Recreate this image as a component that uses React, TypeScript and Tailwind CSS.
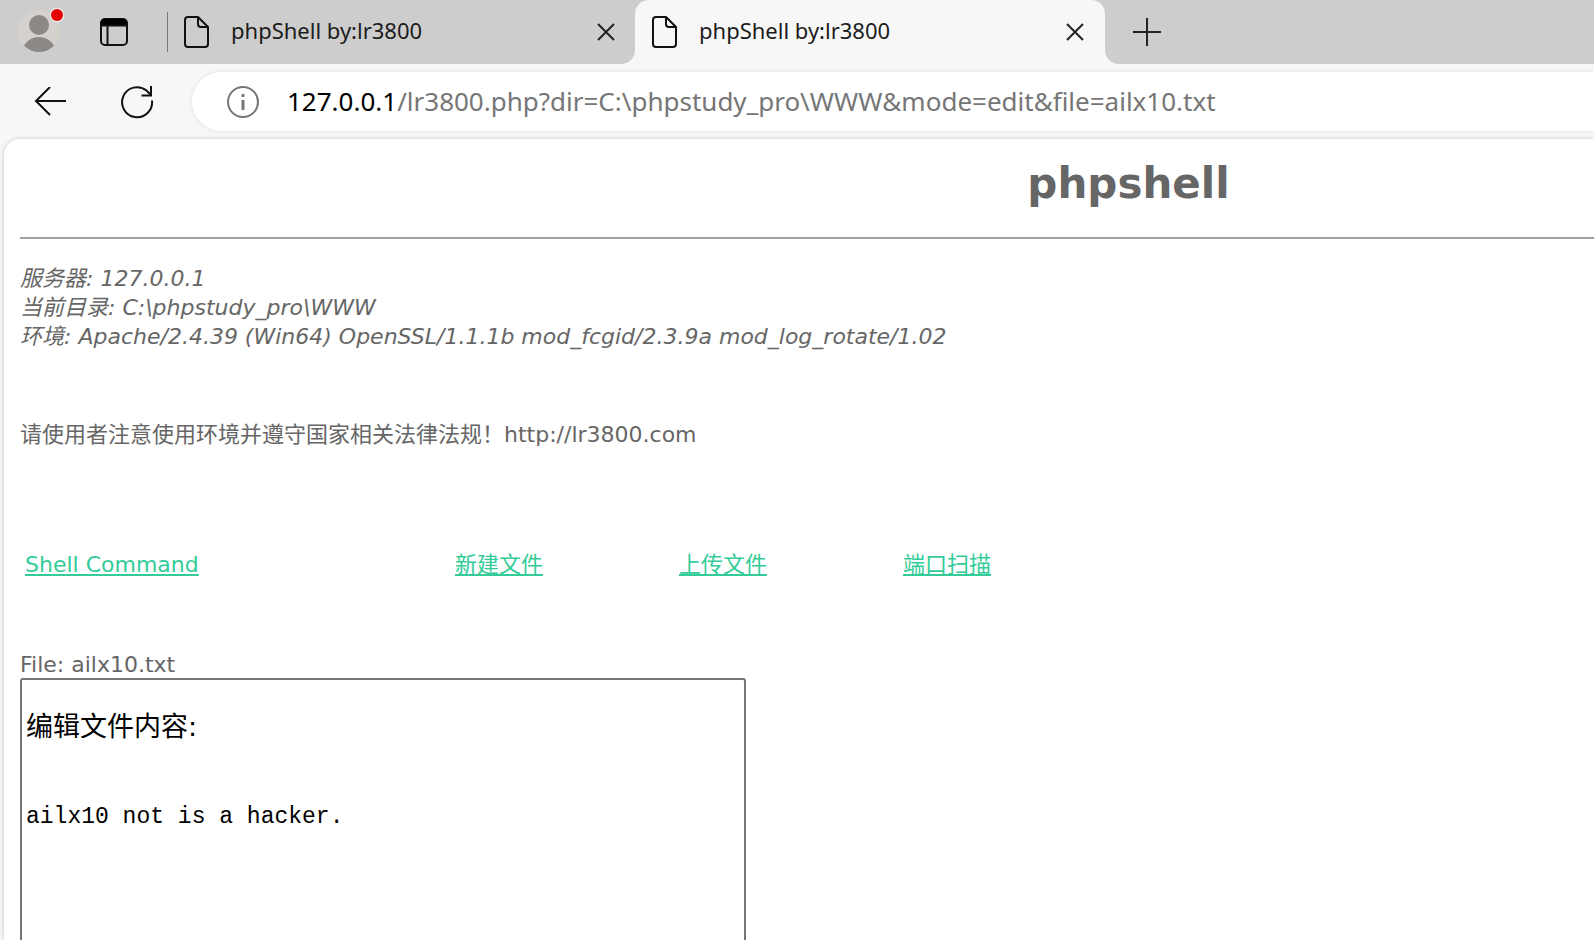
import React, { useState } from 'react';

interface BrowserTab {
  id: number;
  title: string;
}

const TABS: BrowserTab[] = [
  { id: 1, title: 'phpShell by:lr3800' },
  { id: 2, title: 'phpShell by:lr3800' },
];

const SERVER_INFO = [
  { label: '服务器', value: '127.0.0.1' },
  { label: '当前目录', value: 'C:\\phpstudy_pro\\WWW' },
  { label: '环境', value: 'Apache/2.4.39 (Win64) OpenSSL/1.1.1b mod_fcgid/2.3.9a mod_log_rotate/1.02' },
];

const MENU = ['Shell Command', '新建文件', '上传文件', '端口扫描'];

// Icons

function AvatarIcon() {
  return (
    <svg width="48" height="48" viewBox="0 0 48 48">
      <defs>
        <clipPath id="avatar-clip">
          <circle cx="21" cy="25" r="21" />
        </clipPath>
      </defs>
      <circle cx="21" cy="25" r="21" fill="#d5d2cd" />
      <g clipPath="url(#avatar-clip)" fill="#8c8886">
        <circle cx="21" cy="19" r="10" />
        <ellipse cx="21" cy="47" rx="17" ry="16" />
      </g>
      <circle cx="39" cy="9" r="7.5" fill="#e8e6e4" />
      <circle cx="39" cy="9" r="6" fill="#e60000" />
    </svg>
  );
}

function TabActionsIcon() {
  return (
    <svg width="28" height="28" viewBox="0 0 28 28" fill="none" stroke="#111" strokeWidth="2">
      <rect x="1" y="1" width="26" height="26" rx="4" />
      <path d="M1 8V5a4 4 0 0 1 4-4h18a4 4 0 0 1 4 4v3z" fill="#000" stroke="none" />
      <path d="M1 7.5h26M7.500 8v19" />
    </svg>
  );
}

function FileIcon() {
  return (
    <svg className="shrink-0" width="25" height="32" viewBox="0 0 25 32" fill="none" stroke="#111" strokeWidth="2" strokeLinejoin="round">
      <path d="M14 1H4a3 3 0 0 0-3 3v24a3 3 0 0 0 3 3h17a3 3 0 0 0 3-3V11z" />
      <path d="M14 1v7a3 3 0 0 0 3 3h7" />
    </svg>
  );
}

function CloseIcon() {
  return (
    <svg width="18" height="18" viewBox="0 0 18 18" stroke="#222" strokeWidth="2">
      <path d="M1 1l16 16M17 1L1 17" />
    </svg>
  );
}

function PlusIcon() {
  return (
    <svg width="28" height="28" viewBox="0 0 28 28" stroke="#222" strokeWidth="2">
      <path d="M14 0v28M0 14h28" />
    </svg>
  );
}

function BackIcon() {
  return (
    <svg width="32" height="30" viewBox="0 0 32 30" fill="none" stroke="#111" strokeWidth="2">
      <path d="M16 0L2 14l14 14M2 14h30" />
    </svg>
  );
}

function RefreshIcon() {
  return (
    <svg width="34" height="34" viewBox="0 0 34 34" fill="none" stroke="#111" strokeWidth="2">
      <path d="M32 15.500A15 15 0 1 1 26.500 5.500L31 10" />
      <path d="M31 1v9.500h-9.500" />
    </svg>
  );
}

function InfoIcon() {
  return (
    <svg width="32" height="32" viewBox="0 0 32 32" fill="none" stroke="#767676" strokeWidth="2">
      <circle cx="16" cy="16" r="15" />
      <path d="M16 14v10" strokeWidth="3" />
      <path d="M16 8v3" strokeWidth="3" />
    </svg>
  );
}

function TabContent({ tab }: { tab: BrowserTab }) {
  return (
    <>
      <FileIcon />
      <span className="ml-[22px] flex-1 whitespace-nowrap pb-1 text-[22px] leading-7 text-[#1b1b1b]">{tab.title}</span>
      <button aria-label="Close tab">
        <CloseIcon />
      </button>
    </>
  );
}

function TabStrip() {
  return (
    <div className="flex h-16 bg-[#f7f7f7]">
      <div className="flex items-center rounded-br-[14px] bg-[#cdcdcd] pl-[18px]">
        <button aria-label="Profile" className="-mt-1">
          <AvatarIcon />
        </button>
        <button aria-label="Tab actions" className="ml-[34px]">
          <TabActionsIcon />
        </button>
        <div className="ml-[39px] h-10 w-px bg-[#777]" />
        <div className="flex w-[467px] items-center pl-4 pr-5">
          <TabContent tab={TABS[0]} />
        </div>
      </div>
      {/* gray behind the rounded corners of the active tab */}
      <div className="bg-[#cdcdcd]">
        <div className="flex h-16 w-[470px] items-center rounded-t-[14px] bg-[#f7f7f7] pl-[17px] pr-[21px]">
          <TabContent tab={TABS[1]} />
        </div>
      </div>
      <div className="flex flex-1 items-center rounded-bl-[14px] bg-[#cdcdcd] pl-7">
        <button aria-label="New tab">
          <PlusIcon />
        </button>
      </div>
    </div>
  );
}

function AddressBar() {
  const [path, setPath] = useState('/lr3800.php?dir=C:\\phpstudy_pro\\WWW&mode=edit&file=ailx10.txt');

  return (
    <div className="flex items-center bg-[#f7f7f7] pb-2 pl-[34px] pt-2">
      <button aria-label="Back">
        <BackIcon />
      </button>
      <button aria-label="Refresh" className="ml-[54px]">
        <RefreshIcon />
      </button>
      <div className="ml-[38px] flex h-[59px] flex-1 items-center rounded-l-full bg-white pl-[35px] shadow-[0_0_4px_rgba(0,0,0,0.1)]">
        <InfoIcon />
        <label htmlFor="address" className="ml-7 text-[26px] text-black">
          127.0.0.1
        </label>
        <input
          id="address"
          value={path}
          onChange={(e) => setPath(e.target.value)}
          className="min-w-0 flex-1 bg-transparent text-[26px] text-[#767676] outline-none"
        />
      </div>
    </div>
  );
}

function ShellPage() {
  const [content, setContent] = useState('ailx10 not is a hacker.');

  return (
    <main className="ml-1 flex flex-1 flex-col rounded-tl-2xl bg-white pl-4 font-['DejaVu_Sans','Noto_Sans_CJK_SC',sans-serif] text-[22px] leading-[29px] text-[#666] shadow-[0_0_4px_rgba(0,0,0,0.2)]">
      <h1 className="pl-[64%] pt-4 text-[42px] font-bold leading-[58px]">phpshell</h1>
      <hr className="mt-6 border-t-2 border-[#a0a0a0]" />

      <address className="mt-[25px]">
        {SERVER_INFO.map((row) => (
          <div key={row.label}>
            {row.label}: {row.value}
          </div>
        ))}
      </address>

      <p className="mt-[69px]">请使用者注意使用环境并遵守国家相关法律法规！http://lr3800.com</p>

      <nav className="mt-[101px] grid grid-cols-[430px_224px_224px_auto] pl-[5px] text-[#33cc99]">
        {MENU.map((item) => (
          <div key={item}>
            <a href="#" className="underline">
              {item}
            </a>
          </div>
        ))}
      </nav>

      <div className="mt-[73px] leading-[26px]">File: ailx10.txt</div>
      <div className="flex w-[726px] flex-1 flex-col rounded-t-[3px] border-2 border-b-0 border-[#767676] px-1 pt-8 text-black">
        <label htmlFor="content" className="text-[27px] leading-[30px]">
          编辑文件内容:
        </label>
        <textarea
          id="content"
          value={content}
          onChange={(e) => setContent(e.target.value)}
          className="mt-[60px] w-full flex-1 resize-none font-['Liberation_Mono','Noto_Sans_CJK_SC',monospace] text-[23px] leading-[30px] outline-none"
        />
      </div>
    </main>
  );
}

export default function App() {
  return (
    <div className="flex h-screen flex-col overflow-hidden bg-[#f7f7f7] font-['Noto_Sans','Noto_Sans_CJK_SC',sans-serif]">
      <TabStrip />
      <AddressBar />
      <ShellPage />
    </div>
  );
}
